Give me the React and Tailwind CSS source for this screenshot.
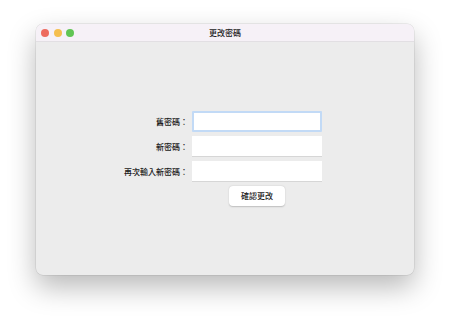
import React from 'react';

const fields = ['舊密碼：', '新密碼：', '再次輸入新密碼：'];

const App = () => {
  return (
    <div className="w-[452px] h-[322px] bg-white pt-[24px] pl-[36px] overflow-hidden" style={{ fontFamily: '"Noto Sans CJK TC", "Noto Sans", sans-serif' }}>
      <div className="w-[378px] h-[251px] rounded-[7px] bg-[#ececec] shadow-[0_12px_28px_rgba(0,0,0,0.28),0_0_0_0.5px_rgba(0,0,0,0.12)] overflow-hidden flex flex-col">
        <div className="h-[18px] bg-[#f6f1f7] border-b border-[#e2dfe3] flex items-center relative">
          <div className="flex gap-[4.5px] pl-[5px]">
            <span className="w-[8px] h-[8px] rounded-full bg-[#ed6a5e]" />
            <span className="w-[8px] h-[8px] rounded-full bg-[#f5bf4f]" />
            <span className="w-[8px] h-[8px] rounded-full bg-[#61c554]" />
          </div>
          <div className="absolute inset-0 flex items-center justify-center text-[8px] font-medium text-[#222]">更改密碼</div>
        </div>
        <div className="flex-1 flex items-center">
          <div className="ml-[79px] grid grid-cols-[73px_130px] gap-x-[4px] gap-y-[4px] items-center">
            {fields.map((label, i) => (
              <React.Fragment key={label}>
                <div className="text-right text-[8px] font-medium text-[#1a1a1a]">{label}</div>
                <div
                  className={
                    i === 0
                      ? 'h-[21px] bg-white border-2 border-[#c2daf6] rounded-[1px]'
                      : 'h-[21px] bg-white border-b border-[#d6d6d6]'
                  }
                />
              </React.Fragment>
            ))}
            <div />
            <div className="flex justify-center">
              <button className="w-[56px] h-[20px] bg-white rounded-[4px] text-[8px] font-medium text-[#1a1a1a] shadow-[0_0.5px_1.5px_rgba(0,0,0,0.2)]">
                確認更改
              </button>
            </div>
          </div>
        </div>
      </div>
    </div>
  );
};

export default App;
